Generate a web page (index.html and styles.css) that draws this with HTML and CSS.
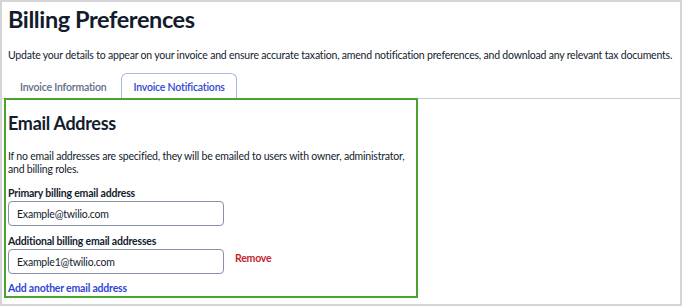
FILE: index.html
```html
<!DOCTYPE html>
<html lang="en">
<head>
<meta charset="utf-8">
<title>Billing Preferences</title>
<link rel="stylesheet" href="styles.css">
</head>
<body>
<div class="frame">
  <h1 class="title">Billing Preferences</h1>
  <p class="desc">Update your details to appear on your invoice and ensure accurate taxation, amend notification preferences, and download any relevant tax documents.</p>
  <div class="tabs">
    <div class="tab">Invoice Information</div>
    <div class="tab tab-active">Invoice Notifications</div>
  </div>
  <section class="panel">
    <h2 class="panel-title">Email Address</h2>
    <p class="help">If no email addresses are specified, they will be emailed to users with owner, administrator, and billing roles.</p>
    <div class="field">
      <label class="label">Primary billing email address</label>
      <div class="row">
        <div class="input">Example@twilio.com</div>
      </div>
    </div>
    <div class="field">
      <label class="label">Additional billing email addresses</label>
      <div class="row">
        <div class="input">Example1@twilio.com</div>
        <span class="remove">Remove</span>
      </div>
    </div>
    <a class="add" href="#">Add another email address</a>
  </section>
</div>
</body>
</html>
```

FILE: styles.css
```css
* { box-sizing: border-box; }
html, body { margin: 0; padding: 0; background: #fff; }
body {
  font-family: Lato, "Open Sans", sans-serif;
  color: #121c2d;
  letter-spacing: -0.2px;
}
.frame {
  width: 682px;
  height: 306px;
  border: 2px solid #d5d5d7;
  overflow: hidden;
}
.title {
  margin: 2px 0 0 6px;
  font-size: 23.5px;
  line-height: 30px;
  font-weight: 700;
  letter-spacing: -0.4px;
}
.desc {
  margin: 14px 0 0 6px;
  font-size: 10.5px;
  line-height: 14px;
  white-space: nowrap;
}
.tabs {
  display: flex;
  gap: 3px;
  margin-top: 11px;
  padding-left: 6px;
  border-bottom: 1px solid #cacdd8;
}
.tab {
  height: 25px;
  padding: 1px 11px 0;
  display: flex;
  align-items: center;
  font-size: 10.5px;
  font-weight: 600;
  color: #606b85;
  border: 1px solid transparent;
  border-bottom: none;
  border-radius: 6px 6px 0 0;
}
.tab-active {
  color: #2f47d4;
  border-color: #a9b5ee;
}
.panel {
  width: 414px;
  height: 200px;
  margin: -1px 0 0 2px;
  border: 2px solid #4ca22f;
  padding: 10px 2px 0 2px;
}
.panel-title {
  margin: 0;
  font-size: 18px;
  line-height: 26px;
  font-weight: 700;
  letter-spacing: -0.3px;
}
.help {
  margin: 14px 0 0 0;
  font-size: 10.5px;
  line-height: 13px;
}
.field { margin-top: 10px; }
.field + .field { margin-top: 8px; }
.label {
  display: block;
  font-size: 10.5px;
  line-height: 14px;
  font-weight: 700;
}
.row {
  display: flex;
  align-items: center;
  gap: 11px;
  margin-top: 1px;
}
.input {
  width: 216px;
  height: 25px;
  border: 1px solid #8891aa;
  border-radius: 4px;
  padding: 0 8px;
  display: flex;
  align-items: center;
  font-size: 10.5px;
  color: #121c2d;
}
.remove {
  font-size: 10.5px;
  font-weight: 700;
  color: #c2262e;
  margin-top: -8px;
}
.add {
  display: block;
  margin-top: 8px;
  font-size: 10.5px;
  font-weight: 700;
  color: #2f47d4;
  text-decoration: none;
}
```
